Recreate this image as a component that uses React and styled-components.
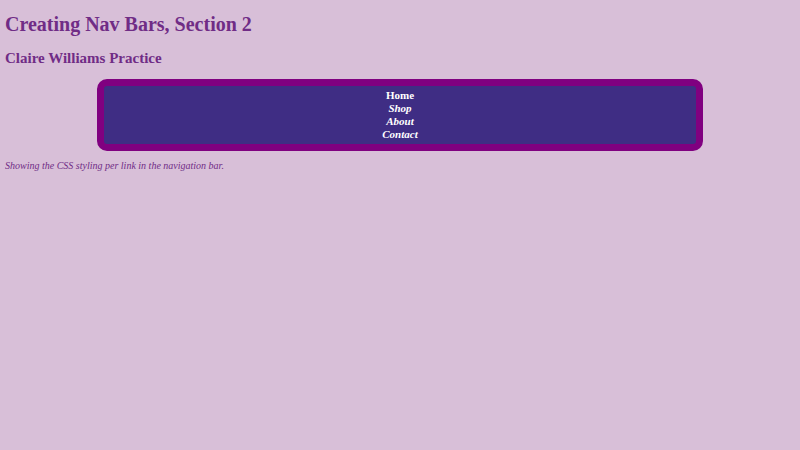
import styled, { createGlobalStyle } from "styled-components"

const GlobalStyle = createGlobalStyle`
    body{
        margin:5px;
        background-color:thistle;
        color:#702c86;
        font-family:"Liberation Serif", "Times New Roman", serif;
    }
`
const Title = styled.h1`
    margin:8px 0px 14px;
    font-size:20px;
    line-height:23px;
`
const SubTitle = styled.h2`
    margin:0px 0px 12px;
    font-size:15px;
    line-height:17px;
`
const Nav = styled.nav`
    width:75%;
    margin:0px auto;
    border:7px solid purple;
    border-radius:10px;
    background-color:#3f2d84;
`
const List = styled.ul`
    margin:0px;
    padding:3px 0px;
    list-style:none;
    text-align:center;
`
const Item = styled.li`
    font-size:11px;
    line-height:13px;
`
const Link = styled.a`
    color:white;
    font-weight:bold;
    font-style:${props=>props.$active ? "normal" : "italic"};
    text-decoration:none;
`
const Desc = styled.p`
    margin:9px 0px;
    font-size:10px;
    font-style:italic;
`

const links = ["Home", "Shop", "About", "Contact"]

const App = () => {
  return (
    <>
        <GlobalStyle/>
        <Title>Creating Nav Bars, Section 2</Title>
        <SubTitle>Claire Williams Practice</SubTitle>
        <Nav>
            <List>
                {links.map((name)=>(
                    <Item key={name}>
                        <Link href={"#" + name.toLowerCase()} $active={name === "Home"}>{name}</Link>
                    </Item>
                ))}
            </List>
        </Nav>
        <Desc>Showing the CSS styling per link in the navigation bar.</Desc>
    </>
  )
}

export default App
